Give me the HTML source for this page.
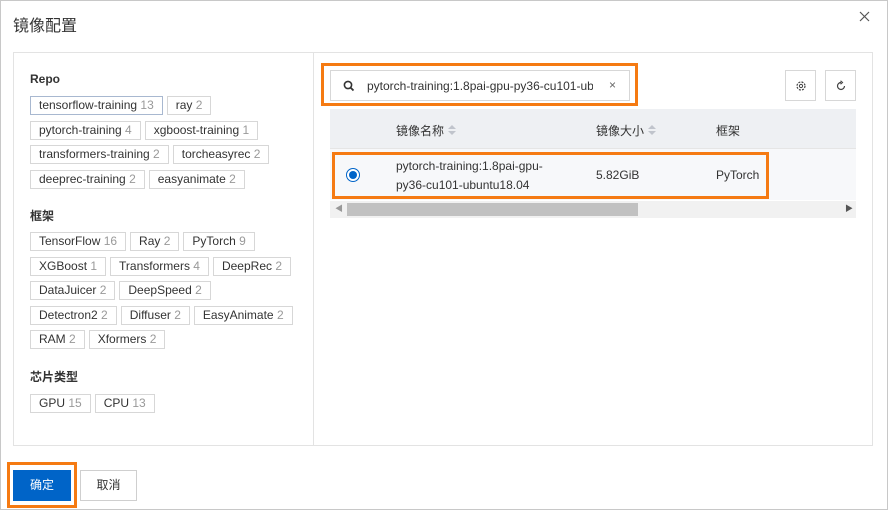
<!DOCTYPE html>
<html><head><meta charset="utf-8"><style>
*{box-sizing:border-box;margin:0;padding:0}
body{width:888px;height:510px;background:#fff;font-family:"Liberation Sans","Noto Sans CJK SC",sans-serif;color:#333;position:relative;overflow:hidden;font-size:12px}
.frame{position:absolute;left:0;top:0;width:888px;height:510px;border:1px solid #c8c8c8}
.title{position:absolute;left:13px;top:12px;font-size:16px;color:#333}
.box{position:absolute;left:13px;top:52px;width:860px;height:394px;border:1px solid #e3e3e3}
.div{position:absolute;left:313px;top:53px;width:1px;height:392px;background:#e3e3e3}
.h{position:absolute;left:30px;font-size:12px;font-weight:bold;color:#333}
.row{position:absolute;left:30px;display:flex;gap:4px}
.tag{height:19px;line-height:17px;border:1px solid #d7d7d7;padding:0 8px;font-size:12px;color:#333;white-space:nowrap;background:#fff}
.tag.sel{border-color:#a8b8d0}
.tag i{font-style:normal;color:#999}
.o{position:absolute;border:3px solid #f57a12}
.search{position:absolute;left:330px;top:70px;width:300px;height:31px;border:1px solid #d7d7d7;background:#fff}
.ib{position:absolute;top:70px;width:31px;height:31px;border:1px solid #d7d7d7;background:#fff}
.th{position:absolute;left:330px;top:109px;width:526px;height:39px;background:#eef0f3}
.tr{position:absolute;left:330px;top:148px;width:526px;height:52px;background:#f7f8fa;border-top:1px solid #e5e5e5}
.t{position:absolute;font-size:12px;color:#333}
.btn{position:absolute;top:470px;height:31px;font-size:12px;text-align:center;line-height:31px}
.sort{display:inline-block;vertical-align:-1px;margin-left:4px}
</style></head><body>
<div class="frame"></div>
<div class="title">镜像配置</div>
<svg style="position:absolute;left:859px;top:11px" width="11" height="11" viewBox="0 0 11 11"><path d="M1 1L10 10M10 1L1 10" stroke="#555" stroke-width="1.2"/></svg>
<div class="box"></div><div class="div"></div>

<div class="h" style="top:72px">Repo</div>
<div class="row" style="top:96px"><span class="tag sel">tensorflow-training <i>13</i></span><span class="tag">ray <i>2</i></span></div>
<div class="row" style="top:121px"><span class="tag">pytorch-training <i>4</i></span><span class="tag">xgboost-training <i>1</i></span></div>
<div class="row" style="top:145px"><span class="tag">transformers-training <i>2</i></span><span class="tag">torcheasyrec <i>2</i></span></div>
<div class="row" style="top:170px"><span class="tag">deeprec-training <i>2</i></span><span class="tag">easyanimate <i>2</i></span></div>

<div class="h" style="top:207px">框架</div>
<div class="row" style="top:232px"><span class="tag">TensorFlow <i>16</i></span><span class="tag">Ray <i>2</i></span><span class="tag">PyTorch <i>9</i></span></div>
<div class="row" style="top:257px"><span class="tag">XGBoost <i>1</i></span><span class="tag">Transformers <i>4</i></span><span class="tag">DeepRec <i>2</i></span></div>
<div class="row" style="top:281px"><span class="tag">DataJuicer <i>2</i></span><span class="tag">DeepSpeed <i>2</i></span></div>
<div class="row" style="top:306px"><span class="tag">Detectron2 <i>2</i></span><span class="tag">Diffuser <i>2</i></span><span class="tag">EasyAnimate <i>2</i></span></div>
<div class="row" style="top:330px"><span class="tag">RAM <i>2</i></span><span class="tag">Xformers <i>2</i></span></div>

<div class="h" style="top:368px">芯片类型</div>
<div class="row" style="top:394px"><span class="tag">GPU <i>15</i></span><span class="tag">CPU <i>13</i></span></div>

<div class="search">
<svg style="position:absolute;left:12px;top:9px" width="12" height="12" viewBox="0 0 12 12"><circle cx="5" cy="5" r="3.6" fill="none" stroke="#333" stroke-width="1.6"/><path d="M7.7 7.7L10.5 10.5" stroke="#333" stroke-width="1.8"/></svg>
<div class="t" style="left:36px;top:8px;width:226px;overflow:hidden;white-space:nowrap">pytorch-training:1.8pai-gpu-py36-cu101-ubuntu18.04</div>
<div class="t" style="left:278px;top:7px;color:#666">×</div>
</div>
<div class="o" style="left:321px;top:63px;width:317px;height:43px"></div>
<div class="ib" style="left:785px"><svg style="position:absolute;left:9px;top:9px" width="12" height="12" viewBox="0 0 12 12"><circle cx="6" cy="6" r="4" fill="none" stroke="#444" stroke-width="1.2" stroke-dasharray="2 1.2"/><circle cx="6" cy="6" r="1.6" fill="none" stroke="#444"/></svg></div>
<div class="ib" style="left:825px"><svg style="position:absolute;left:9px;top:9px" width="12" height="12" viewBox="0 0 12 12"><path d="M9.5 6A3.5 3.5 0 1 1 6 2.5" fill="none" stroke="#444" stroke-width="1.2"/><path d="M5.5 0.8L7.5 2.5L5.5 4.2" fill="none" stroke="#444" stroke-width="1.1"/></svg></div>

<div class="th"></div>
<div class="t" style="left:396px;top:122px">镜像名称<svg class="sort" width="8" height="12" viewBox="0 0 8 12"><path d="M0 5L4 1L8 5Z M0 7L4 11L8 7Z" fill="#c0c4cc"/></svg></div>
<div class="t" style="left:596px;top:122px">镜像大小<svg class="sort" width="8" height="12" viewBox="0 0 8 12"><path d="M0 5L4 1L8 5Z M0 7L4 11L8 7Z" fill="#c0c4cc"/></svg></div>
<div class="t" style="left:716px;top:122px">框架</div>
<div class="tr"></div>
<div style="position:absolute;left:346px;top:168px;width:14px;height:14px;border:1px solid #0064c8;border-radius:50%;background:#fff"><div style="position:absolute;left:2px;top:2px;width:8px;height:8px;border-radius:50%;background:#0064c8"></div></div>
<div class="t" style="left:396px;top:157px;line-height:19px">pytorch-training:1.8pai-gpu-<br>py36-cu101-ubuntu18.04</div>
<div class="t" style="left:596px;top:168px">5.82GiB</div>
<div class="t" style="left:716px;top:168px">PyTorch</div>
<div class="o" style="left:332px;top:152px;width:437px;height:47px"></div>
<div style="position:absolute;left:330px;top:201px;width:526px;height:17px;background:#f1f1f1"></div>
<div style="position:absolute;left:347px;top:203px;width:291px;height:13px;background:#c1c1c1"></div>
<div class="t" style="left:335px;top:203px;color:#999;font-size:8px">◀</div>
<div class="t" style="left:845px;top:203px;color:#555;font-size:8px">▶</div>

<div class="o" style="left:7px;top:462px;width:70px;height:46px"></div>
<div class="btn" style="left:13px;width:58px;background:#0064c8;color:#fff">确定</div>
<div class="btn" style="left:80px;width:57px;border:1px solid #cfcfcf;color:#333;line-height:29px">取消</div>
</body></html>
